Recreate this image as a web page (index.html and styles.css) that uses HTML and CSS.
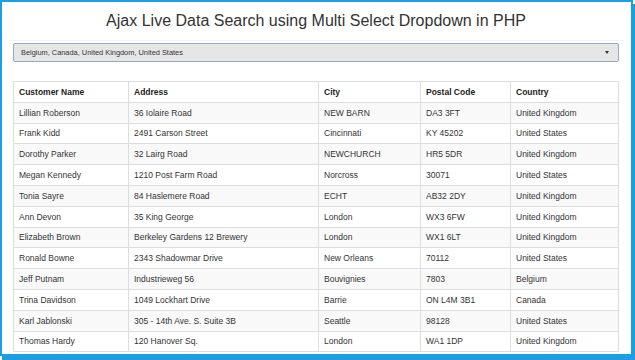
FILE: index.html
```html
<!DOCTYPE html>
<html lang="en">
<head>
    <meta charset="UTF-8">
    <meta name="viewport" content="width=device-width, initial-scale=1.0">
    <title>Ajax Live Data Search using Multi Select Dropdown in PHP</title>
    <link rel="stylesheet" href="styles.css">
</head>
<body>
    <div class="frame">
        <h1 class="title">Ajax Live Data Search using Multi Select Dropdown in PHP</h1>

        <div class="select-box">
            <span class="select-text">Belgium, Canada, United Kingdom, United States</span>
            <span class="caret"></span>
        </div>

        <table class="data-table">
            <thead>
                <tr>
                    <th class="col-name">Customer Name</th>
                    <th class="col-address">Address</th>
                    <th class="col-city">City</th>
                    <th class="col-postal">Postal Code</th>
                    <th>Country</th>
                </tr>
            </thead>
            <tbody id="rows"></tbody>
        </table>
    </div>

    <script>
        const customers = [
            ['Lillian Roberson', '36 Iolaire Road', 'NEW BARN', 'DA3 3FT', 'United Kingdom'],
            ['Frank Kidd', '2491 Carson Street', 'Cincinnati', 'KY 45202', 'United States'],
            ['Dorothy Parker', '32 Lairg Road', 'NEWCHURCH', 'HR5 5DR', 'United Kingdom'],
            ['Megan Kennedy', '1210 Post Farm Road', 'Norcross', '30071', 'United States'],
            ['Tonia Sayre', '84 Haslemere Road', 'ECHT', 'AB32 2DY', 'United Kingdom'],
            ['Ann Devon', '35 King George', 'London', 'WX3 6FW', 'United Kingdom'],
            ['Elizabeth Brown', 'Berkeley Gardens 12 Brewery', 'London', 'WX1 6LT', 'United Kingdom'],
            ['Ronald Bowne', '2343 Shadowmar Drive', 'New Orleans', '70112', 'United States'],
            ['Jeff Putnam', 'Industrieweg 56', 'Bouvignies', '7803', 'Belgium'],
            ['Trina Davidson', '1049 Lockhart Drive', 'Barrie', 'ON L4M 3B1', 'Canada'],
            ['Karl Jablonski', '305 - 14th Ave. S. Suite 3B', 'Seattle', '98128', 'United States'],
            ['Thomas Hardy', '120 Hanover Sq.', 'London', 'WA1 1DP', 'United Kingdom']
        ];

        document.getElementById('rows').innerHTML = customers.map(row => `
            <tr>${row.map(cell => `<td>${cell}</td>`).join('')}</tr>
        `).join('');
    </script>
</body>
</html>
```

FILE: styles.css
```css
:root {
    --frame-blue: #1b9fe2;
    --line: #dddddd;
    --stripe: #f9f9f9;
    --text: #333333;
}

* {
    margin: 0;
    padding: 0;
    box-sizing: border-box;
}

body {
    font-family: "Liberation Sans", Arial, sans-serif;
    color: var(--text);
    background: #ffffff;
    width: 635px;
    height: 360px;
    overflow: hidden;
}

.frame {
    width: 633px;
    height: 356px;
    border: 2px solid var(--frame-blue);
    box-shadow: 2px 4px 0 0 var(--frame-blue);
    padding: 0 12px 0 11px;
    overflow: hidden;
}

.title {
    font-size: 16px;
    font-weight: normal;
    text-align: center;
    line-height: 20px;
    padding-top: 9px;
    padding-bottom: 9px;
    border-bottom: 1px solid #f3f3f3;
    margin: 0 -4px;
}

.select-box {
    margin-top: 2px;
    height: 19px;
    display: flex;
    align-items: center;
    justify-content: space-between;
    padding: 0 7px 0 7px;
    background: #e6e6e6;
    border: 1px solid #98a9c6;
    border-radius: 2px;
    font-size: 7.4px;
}

.caret {
    width: 0;
    height: 0;
    border-left: 2.5px solid transparent;
    border-right: 2.5px solid transparent;
    border-top: 3px solid #333333;
    margin-right: 2px;
}

.data-table {
    margin-top: 19px;
    width: 100%;
    border-collapse: collapse;
    font-size: 8.5px;
}

.data-table th,
.data-table td {
    border: 1px solid var(--line);
    text-align: left;
    padding: 0 5px;
    height: 20.8px;
    white-space: nowrap;
}

.data-table th {
    font-weight: bold;
    color: #222222;
}

.data-table tbody tr:nth-child(odd) {
    background: var(--stripe);
}

.col-name { width: 115px; }
.col-address { width: 190px; }
.col-city { width: 102px; }
.col-postal { width: 90px; }
```
